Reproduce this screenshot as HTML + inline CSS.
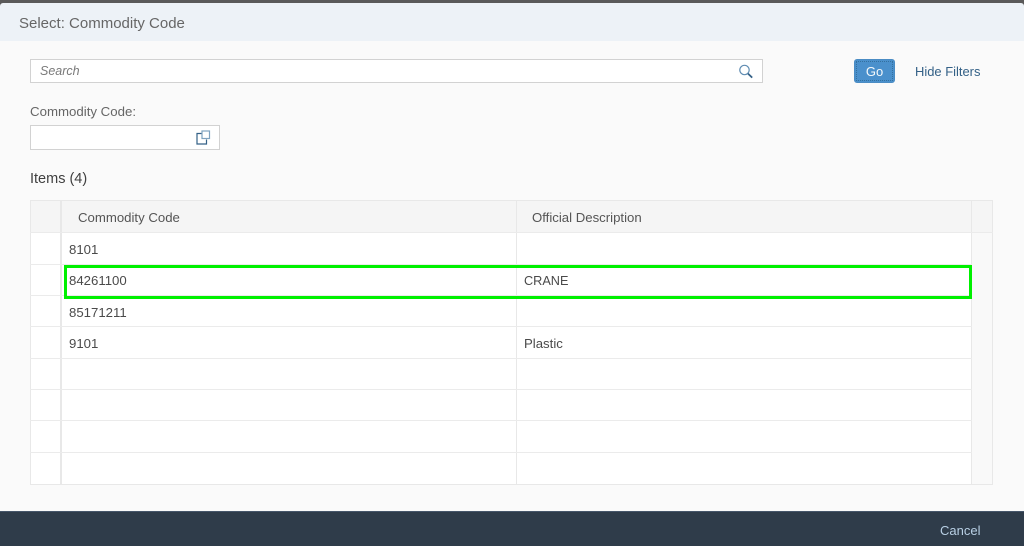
<!DOCTYPE html>
<html>
<head>
<meta charset="utf-8">
<style>
html,body{margin:0;padding:0;width:1024px;height:546px;overflow:hidden;background:#555;font-family:"Liberation Sans",sans-serif}
.a{position:absolute;box-sizing:border-box;white-space:nowrap}
.h{background:#ebebeb;height:1px;position:absolute}
.v{background:#e8e8e8;width:1px;position:absolute}
.t{font-size:13.2px;color:#4a4a4a;line-height:16px}
</style>
</head>
<body>
<div class="a" style="left:0;top:0;width:1024px;height:3px;background:#5a5a5a"></div>
<div class="a" style="left:0;top:3px;width:1024px;height:38px;background:#edf2f7;border-radius:3px 3px 0 0"></div>
<div class="a" style="left:0;top:41px;width:1024px;height:470px;background:#fafafa"></div>
<div class="a" style="left:0;top:511px;width:1024px;height:35px;background:#2f3c4a;border-top:1px solid #46566a"></div>

<div class="a" style="left:19px;top:15px;font-size:15px;line-height:17px;color:#666">Select: Commodity Code</div>

<div class="a" style="left:30px;top:59px;width:733px;height:24px;background:#fff;border:1px solid #d2d2d2"></div>
<div class="a" style="left:40px;top:64px;font-size:12.5px;line-height:15px;font-style:italic;color:#7a7a7a">Search</div>
<svg class="a" style="left:738px;top:64px" width="16" height="15" viewBox="0 0 16 15"><circle cx="6.5" cy="6" r="4.7" fill="none" stroke="#5f8cb2" stroke-width="1.2"/><path d="M10 9.6L14.2 13.6" stroke="#346187" stroke-width="1.8" fill="none"/></svg>

<div class="a" style="left:854px;top:59px;width:41px;height:24px;background:#4a90cc;border-radius:3px;border:1px solid #4a8cc4"></div>
<div class="a" style="left:856px;top:61px;width:37px;height:20px;border:1px dotted #33709f"></div>
<div class="a" style="left:854px;top:64px;width:41px;text-align:center;font-size:13px;line-height:15px;color:#f4f8fb">Go</div>
<div class="a" style="left:915px;top:64px;font-size:12.95px;line-height:15px;color:#346187">Hide Filters</div>

<div class="a" style="left:30px;top:104px;font-size:13.25px;line-height:15px;color:#666">Commodity Code:</div>
<div class="a" style="left:30px;top:125px;width:190px;height:25px;background:#fff;border:1px solid #d2d2d2"></div>
<svg class="a" style="left:196px;top:130px" width="15" height="15" viewBox="0 0 15 15"><path d="M5.5 3.5H1V14H10.5V9.5" fill="none" stroke="#346187" stroke-width="1.2"/><rect x="6" y="1" width="7.5" height="7.5" fill="none" stroke="#7fa3c0" stroke-width="1.2"/></svg>

<div class="a" style="left:30px;top:171px;font-size:14.5px;line-height:16px;color:#404040">Items (4)</div>

<div class="a" style="left:30px;top:200px;width:963px;height:285px;background:#fff;border:1px solid #e8e8e8"></div>
<div class="a" style="left:31px;top:201px;width:961px;height:32px;background:#f5f5f5"></div>
<div class="a" style="left:972px;top:233px;width:20px;height:251px;background:#f9f9f9"></div>
<div class="v" style="left:60px;top:200px;height:285px;width:2px"></div>
<div class="v" style="left:516px;top:200px;height:285px"></div>
<div class="v" style="left:971px;top:200px;height:285px"></div>
<div class="h" style="left:30px;top:232px;width:963px"></div>
<div class="h" style="left:30px;top:264px;width:942px"></div>
<div class="h" style="left:30px;top:295px;width:942px"></div>
<div class="h" style="left:30px;top:326px;width:942px"></div>
<div class="h" style="left:30px;top:358px;width:942px"></div>
<div class="h" style="left:30px;top:389px;width:942px"></div>
<div class="h" style="left:30px;top:420px;width:942px"></div>
<div class="h" style="left:30px;top:452px;width:942px"></div>

<div class="a t" style="left:78px;top:210px;color:#555">Commodity Code</div>
<div class="a t" style="left:532px;top:210px;color:#555">Official Description</div>
<div class="a t" style="left:69px;top:242px">8101</div>
<div class="a t" style="left:69px;top:273px">84261100</div>
<div class="a t" style="left:524px;top:273px;font-size:12.7px">CRANE</div>
<div class="a t" style="left:69px;top:305px">85171211</div>
<div class="a t" style="left:69px;top:336px">9101</div>
<div class="a t" style="left:524px;top:336px">Plastic</div>

<div class="a" style="left:64px;top:265px;width:908px;height:34px;border:3px solid #00f000"></div>

<div class="a" style="left:940px;top:523px;font-size:13px;line-height:16px;color:#b8cfe4">Cancel</div>
</body>
</html>
